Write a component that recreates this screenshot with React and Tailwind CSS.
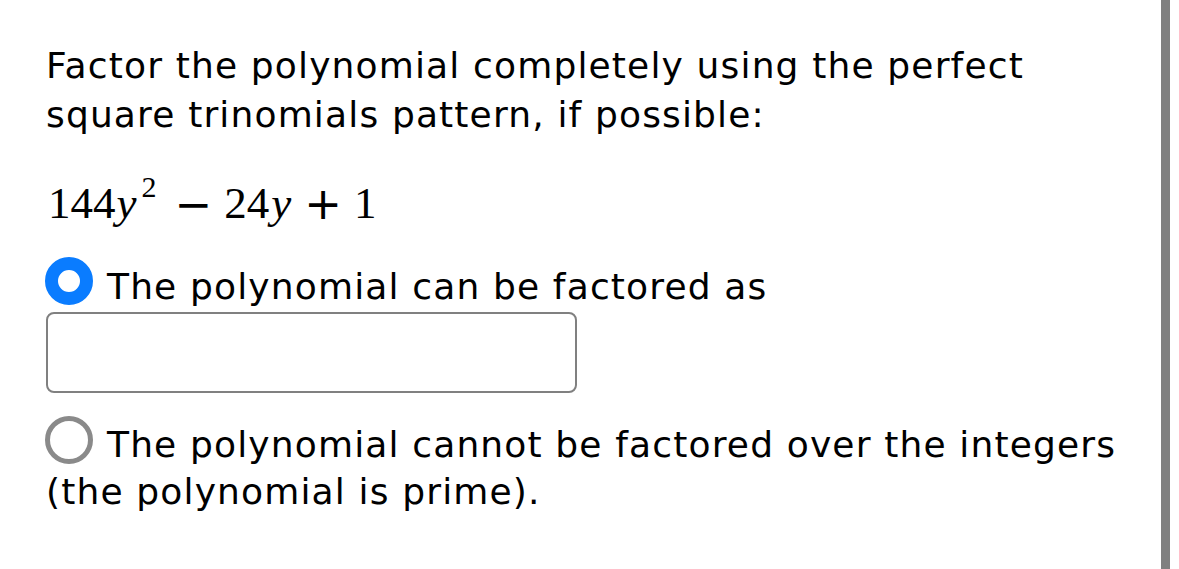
export default function App() {
  return (
    <div className="flex h-[569px] w-[1179px] bg-white text-black">
      <div
        className="flex-1 pl-[46px] pt-[41px] text-[36px] leading-[49px] tracking-[1.15px]"
        style={{ fontFamily: '"DejaVu Sans", Verdana, sans-serif' }}
      >
        <p>
          Factor the polynomial completely using the perfect square trinomials
          pattern, if possible:
        </p>

        {/* expression */}
        <div
          className="mt-[38px] flex items-baseline text-[45px] leading-[52px] tracking-normal"
          style={{ fontFamily: '"Liberation Serif", "Times New Roman", serif' }}
        >
          <span className="ml-[2px]">144</span>
          <span className="ml-px italic">y</span>
          <span className="relative -top-[21px] ml-[5px] text-[30px] leading-none">2</span>
          <span className="relative top-[2px] ml-[18px]" style={{ fontFamily: '"DejaVu Sans", sans-serif' }}>−</span>
          <span className="ml-[12px]">24</span>
          <span className="ml-[2px] italic">y</span>
          <span className="relative top-[1px] ml-[13px]" style={{ fontFamily: '"DejaVu Sans", sans-serif' }}>+</span>
          <span className="ml-[12px]">1</span>
        </div>

        {/* option 1 */}
        <div className="mt-[28px] flex items-start gap-[14px]">
          <span className="-ml-px h-[48px] w-[48px] shrink-0 rounded-full border-[13px] border-[#0a7cff] bg-white" />
          <span className="pt-[5px]">The polynomial can be factored as</span>
        </div>
        <div className="mt-px h-[81px] w-[531px] rounded-[8px] border-2 border-[#808080] bg-white" />

        {/* option 2 */}
        <p className="mt-[23px] leading-[47px]">
          <span className="-ml-px mr-[14px] inline-block h-[48px] w-[48px] rounded-full border-[5px] border-[#8a8a8a] bg-white align-[-7px]" />
          The polynomial cannot be factored over the integers (the polynomial
          is prime).
        </p>
      </div>
      <div className="w-[9px] bg-[#808080]" />
      <div className="w-[9px] bg-white" />
    </div>
  );
}
